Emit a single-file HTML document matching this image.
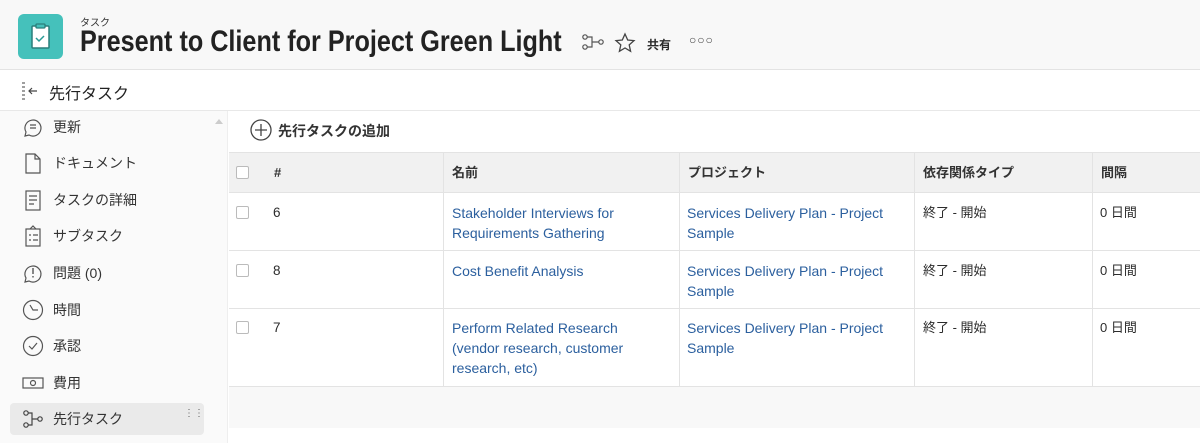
<!DOCTYPE html>
<html><head><meta charset="utf-8"><style>
*{box-sizing:border-box;margin:0;padding:0}
body{width:1200px;height:443px;overflow:hidden;background:#fff;font-family:"Liberation Sans","Noto Sans CJK JP",sans-serif;color:#2c2c2c;position:relative}
.hdr{position:absolute;left:0;top:0;width:1200px;height:70px;background:#f8f8f8;border-bottom:1px solid #e3e3e3}
.logo{position:absolute;left:18px;top:14px;width:45px;height:45px;border-radius:6px;background:#45c1bb}
.kicker{position:absolute;left:80px;top:14px;font-size:10px;color:#333}
.title{position:absolute;left:80px;top:25px;font-size:30px;font-weight:bold;color:#222;transform:scaleX(0.84);transform-origin:left;white-space:nowrap}
.sub{position:absolute;left:0;top:70px;width:1200px;height:41px;border-bottom:1px solid #e8e8e8;background:#fff}
.side{position:absolute;left:0;top:111px;width:228px;height:332px;background:#fafafa;border-right:1px solid #eee}
.item{position:absolute;left:22px;font-size:14px;color:#333;display:flex;align-items:center;gap:9px}
.item svg{width:22px;height:22px}
.sel{position:absolute;left:10px;top:403px;width:194px;height:32px;background:#eaeaea;border-radius:4px}
.th{position:absolute;left:229px;top:152px;width:971px;height:41px;background:#f1f1f1;border-top:1px solid #e3e3e3;border-bottom:1px solid #e3e3e3}
.row{position:absolute;left:229px;width:971px;border-bottom:1px solid #e3e3e3}
.vl{position:absolute;top:152px;height:234px;width:1px;background:#e3e3e3}
.t{position:absolute;font-size:13.5px;line-height:20px}
.h{font-weight:bold;font-size:13px;color:#333}
.lnk{color:#2b5f9e;font-size:14px;white-space:nowrap}
.cb{position:absolute;left:236px;width:13px;height:13px;border:1px solid #bbb;border-radius:2px;background:#fff}
.bot{position:absolute;left:229px;top:387px;width:971px;height:41px;background:#f8f8f8}
</style></head><body>
<div class="hdr">
 <div class="logo"><svg width="45" height="45" viewBox="0 0 45 45"><rect x="14" y="12" width="17" height="22" rx="1" fill="#fff" stroke="#2a7f7b" stroke-width="1.5"/><rect x="18" y="10" width="9" height="4" rx="1" fill="#45c1bb" stroke="#2a7f7b" stroke-width="1.3"/><path d="M18 24l3 3 5-5" fill="none" stroke="#2a9a95" stroke-width="1.5"/></svg></div>
 <div class="kicker">タスク</div>
 <div class="title">Present to Client for Project Green Light</div>
 <svg style="position:absolute;left:582px;top:34px" width="24" height="16" viewBox="0 0 24 16"><circle cx="3" cy="3" r="2.2" fill="none" stroke="#555" stroke-width="1.2"/><circle cx="3" cy="13" r="2.2" fill="none" stroke="#555" stroke-width="1.2"/><circle cx="19" cy="8" r="2.2" fill="none" stroke="#555" stroke-width="1.2"/><path d="M5 3h5v10H5M10 8h7" fill="none" stroke="#555" stroke-width="1.2"/></svg>
 <svg style="position:absolute;left:614px;top:32px" width="22" height="22" viewBox="0 0 22 22"><path d="M11 2l2.7 6 6.3.6-4.8 4.3 1.4 6.4L11 16l-5.6 3.3 1.4-6.4L2 8.6 8.3 8z" fill="none" stroke="#444" stroke-width="1.3"/></svg>
 <div style="position:absolute;left:647px;top:36px;font-size:12px;font-weight:bold">共有</div>
 <div style="position:absolute;left:689px;top:33px;font-size:12px;color:#444;letter-spacing:1px">○○○</div>
</div>
<div class="sub">
 <svg style="position:absolute;left:20px;top:11px" width="20" height="20" viewBox="0 0 20 20"><path d="M2 2h3M2 6h3M2 10h3M2 14h3M2 18h3" stroke="#666" stroke-width="1.2"/><path d="M17 10H9M12 7l-3 3 3 3" fill="none" stroke="#444" stroke-width="1.2"/></svg>
 <div style="position:absolute;left:49px;top:10px;font-size:16px;color:#222">先行タスク</div>
</div>
<div class="side">
 <div style="position:absolute;left:215px;top:8px;width:0;height:0;border-left:4px solid transparent;border-right:4px solid transparent;border-bottom:5px solid #ccc"></div>
</div>
<div class="sel"></div>
<div class="item" style="top:116px"><svg viewBox="0 0 22 22"><path d="M3 20l1-4a8 8 0 1 1 3 3z" fill="none" stroke="#555" stroke-width="1.2"/><path d="M8 9h6M8 12h6" stroke="#555" stroke-width="1.2"/></svg>更新</div>
<div class="item" style="top:152px"><svg viewBox="0 0 22 22"><path d="M4 2h9l5 5v14H4z M13 2v5h5" fill="none" stroke="#555" stroke-width="1.2"/></svg>ドキュメント</div>
<div class="item" style="top:189px"><svg viewBox="0 0 22 22"><rect x="4" y="2" width="14" height="19" fill="none" stroke="#555" stroke-width="1.2"/><path d="M7 7h8M7 11h8M7 15h5" stroke="#555" stroke-width="1.2"/></svg>タスクの詳細</div>
<div class="item" style="top:225px"><svg viewBox="0 0 22 22"><rect x="4" y="4" width="14" height="17" fill="none" stroke="#555" stroke-width="1.2"/><path d="M8 4l3-3 3 3M7 10h2M11 10h5M7 15h2M11 15h5" fill="none" stroke="#555" stroke-width="1.2"/></svg>サブタスク</div>
<div class="item" style="top:262px"><svg viewBox="0 0 22 22"><path d="M3 20l1-4a8 8 0 1 1 3 3z" fill="none" stroke="#555" stroke-width="1.2"/><path d="M11 6v6M11 14v1.5" stroke="#555" stroke-width="1.4"/></svg>問題 (0)</div>
<div class="item" style="top:299px"><svg viewBox="0 0 22 22"><circle cx="11" cy="11" r="9.5" fill="none" stroke="#555" stroke-width="1.2"/><path d="M8 6l3 5h5" fill="none" stroke="#555" stroke-width="1.2"/></svg>時間</div>
<div class="item" style="top:335px"><svg viewBox="0 0 22 22"><circle cx="11" cy="11" r="9.5" fill="none" stroke="#555" stroke-width="1.2"/><path d="M7 11l3 3 5-6" fill="none" stroke="#555" stroke-width="1.2"/></svg>承認</div>
<div class="item" style="top:372px"><svg viewBox="0 0 22 22"><rect x="1" y="6" width="20" height="10" fill="none" stroke="#555" stroke-width="1.2"/><circle cx="11" cy="11" r="2.5" fill="none" stroke="#555" stroke-width="1.2"/></svg>費用</div>
<div class="item" style="top:408px"><svg viewBox="0 0 22 22"><circle cx="4" cy="5" r="2.2" fill="none" stroke="#444" stroke-width="1.2"/><circle cx="4" cy="17" r="2.2" fill="none" stroke="#444" stroke-width="1.2"/><circle cx="18" cy="11" r="2.2" fill="none" stroke="#444" stroke-width="1.2"/><path d="M6 5h4v12H6M10 11h6" fill="none" stroke="#444" stroke-width="1.2"/></svg>先行タスク</div>
<div style="position:absolute;left:184px;top:411px;font-size:10px;color:#666;line-height:5px;letter-spacing:0">⋮⋮</div>

<svg style="position:absolute;left:250px;top:119px" width="22" height="22" viewBox="0 0 22 22"><circle cx="11" cy="11" r="10" fill="none" stroke="#444" stroke-width="1.3"/><path d="M11 5v12M5 11h12" stroke="#444" stroke-width="1.3"/></svg>
<div style="position:absolute;left:278px;top:121px;font-size:14px;font-weight:bold;color:#333">先行タスクの追加</div>

<div class="th"></div>
<div class="row" style="top:193px;height:58px"></div>
<div class="row" style="top:251px;height:58px"></div>
<div class="row" style="top:309px;height:78px"></div>
<div class="vl" style="left:443px"></div>
<div class="vl" style="left:679px"></div>
<div class="vl" style="left:914px"></div>
<div class="vl" style="left:1092px"></div>
<div class="bot"></div>

<div class="cb" style="top:166px"></div>
<div class="cb" style="top:206px"></div>
<div class="cb" style="top:264px"></div>
<div class="cb" style="top:321px"></div>

<div class="t h" style="left:274px;top:163px">#</div>
<div class="t h" style="left:452px;top:163px">名前</div>
<div class="t h" style="left:688px;top:163px">プロジェクト</div>
<div class="t h" style="left:923px;top:163px">依存関係タイプ</div>
<div class="t h" style="left:1101px;top:163px">間隔</div>

<div class="t" style="left:273px;top:203px">6</div>
<div class="t lnk" style="left:452px;top:203px">Stakeholder Interviews for<br>Requirements Gathering</div>
<div class="t lnk" style="left:687px;top:203px">Services Delivery Plan - Project<br>Sample</div>
<div class="t" style="left:923px;top:203px;font-size:13px">終了 - 開始</div>
<div class="t" style="left:1100px;top:203px;font-size:13px">0 日間</div>

<div class="t" style="left:273px;top:261px">8</div>
<div class="t lnk" style="left:452px;top:261px">Cost Benefit Analysis</div>
<div class="t lnk" style="left:687px;top:261px">Services Delivery Plan - Project<br>Sample</div>
<div class="t" style="left:923px;top:261px;font-size:13px">終了 - 開始</div>
<div class="t" style="left:1100px;top:261px;font-size:13px">0 日間</div>

<div class="t" style="left:273px;top:318px">7</div>
<div class="t lnk" style="left:452px;top:318px">Perform Related Research<br>(vendor research, customer<br>research, etc)</div>
<div class="t lnk" style="left:687px;top:318px">Services Delivery Plan - Project<br>Sample</div>
<div class="t" style="left:923px;top:318px;font-size:13px">終了 - 開始</div>
<div class="t" style="left:1100px;top:318px;font-size:13px">0 日間</div>
</body></html>
